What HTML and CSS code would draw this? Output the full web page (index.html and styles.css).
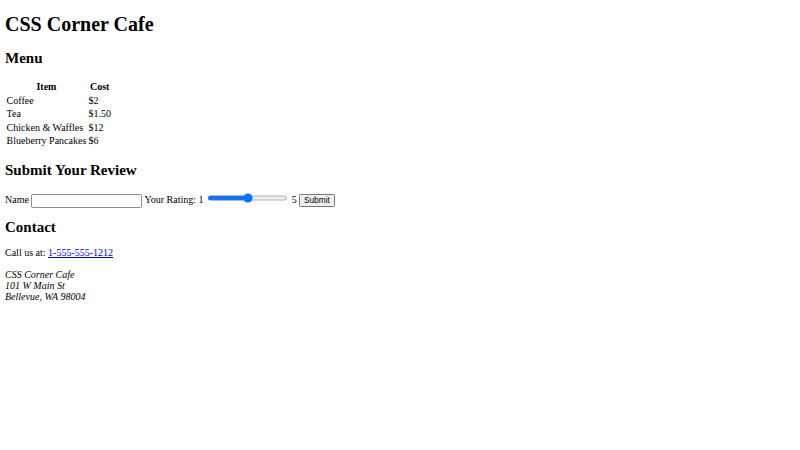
FILE: index.html
```html
<!DOCTYPE html>
<html lang="en">
<head>
<meta charset="utf-8">
<title>CSS Corner Cafe</title>
<link rel="stylesheet" href="styles.css">
</head>
<body class="page">
<h1 class="title">CSS Corner Cafe</h1>
<h2 class="section">Menu</h2>
<table class="menu">
<thead>
<tr><th>Item</th><th>Cost</th></tr>
</thead>
<tbody>
<tr><td>Coffee</td><td>$2</td></tr>
<tr><td>Tea</td><td>$1.50</td></tr>
<tr><td>Chicken &amp; Waffles</td><td>$12</td></tr>
<tr><td>Blueberry Pancakes</td><td>$6</td></tr>
</tbody>
</table>
<h2 class="section">Submit Your Review</h2>
<form class="review">
<label for="name">Name</label>
<input class="name-field" type="text" id="name" name="name">
<label for="rating">Your Rating:</label>
1 <input class="rating" type="range" id="rating" name="rating" min="1" max="5"> 5
<input class="submit" type="submit" value="Submit">
</form>
<h2 class="section">Contact</h2>
<p class="call">Call us at: <a class="phone" href="tel:1-555-555-1212">1-555-555-1212</a></p>
<address class="addr">
CSS Corner Cafe<br>
101 W Main St<br>
Bellevue, WA 98004
</address>
</body>
</html>
```
FILE: styles.css
```css
html {
  margin: 0;
  padding: 0;
}
.page {
  margin: 0;
  padding: 13.4px 5px 5px;
  font-family: "Liberation Serif", "Times New Roman", serif;
  font-size: 10px;
  color: #000;
  background: #fff;
}
.title {
  font-size: 20px;
  margin: 0 0 13.4px;
}
.section {
  font-size: 15px;
  margin: 12.45px 0;
}
.menu {
  border-spacing: 1.25px;
  margin-bottom: 13.45px;
}
.menu th,
.menu td {
  padding: 0.8px 0.6px;
}
.review {
  margin: 0;
  padding-top: 1px;
  margin-bottom: -1px;
}
.name-field {
  box-sizing: border-box;
  width: 111px;
  height: 13.5px;
  margin: 0;
  padding: 0 1px;
  border: 1px solid #8f8f8f;
  border-radius: 1.5px;
  font-size: 8px;
  vertical-align: baseline;
}
.rating,
.submit {
  zoom: 0.625;
}
.call {
  margin: -1px 0 11px;
}
.phone {
  color: #0000ee;
}
.addr {
  font-style: italic;
}
```
